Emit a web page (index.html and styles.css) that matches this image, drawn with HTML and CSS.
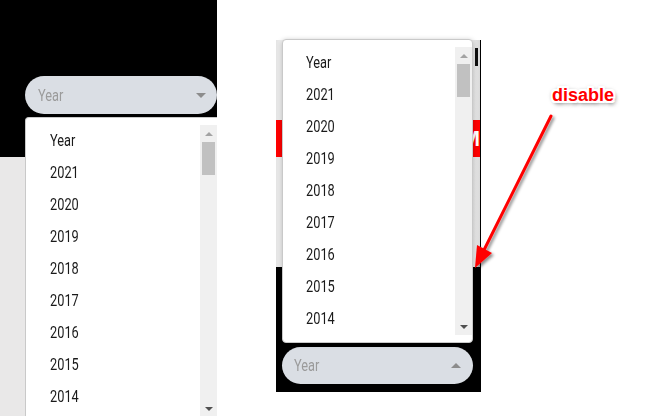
FILE: index.html
```html
<!DOCTYPE html>
<html>
<head>
<meta charset="utf-8">
<link rel="stylesheet" href="styles.css">
</head>
<body>
<div class="page">
  <section class="left">
    <div class="left-top">
      <div class="pill"><span class="pill-text">Year</span><span class="caret caret-down"></span></div>
    </div>
    <div class="left-bottom"></div>
    <div class="menu menu-left">
      <ul class="options">
        <li><span>Year</span></li><li><span>2021</span></li><li><span>2020</span></li><li><span>2019</span></li><li><span>2018</span></li><li><span>2017</span></li><li><span>2016</span></li><li><span>2015</span></li><li><span>2014</span></li>
      </ul>
      <div class="sbar">
        <div class="sbtn"><span class="tri tri-up"></span></div>
        <div class="track"><div class="thumb"></div></div>
        <div class="sbtn"><span class="tri tri-down"></span></div>
      </div>
    </div>
  </section>
  <section class="right">
    <div class="frame">
      <div class="frame-content">
        <div class="tick-bar"></div>
        <div class="banner">M</div>
      </div>
      <div class="frame-bottom">
        <div class="pill pill-wide"><span class="pill-text">Year</span><span class="caret caret-up"></span></div>
      </div>
    </div>
    <div class="menu menu-right">
      <ul class="options">
        <li><span>Year</span></li><li><span>2021</span></li><li><span>2020</span></li><li><span>2019</span></li><li><span>2018</span></li><li><span>2017</span></li><li><span>2016</span></li><li><span>2015</span></li><li><span>2014</span></li>
      </ul>
      <div class="sbar">
        <div class="sbtn"><span class="tri tri-up"></span></div>
        <div class="track"><div class="thumb"></div></div>
        <div class="sbtn"><span class="tri tri-down"></span></div>
      </div>
    </div>
  </section>
  <div class="note">disable</div>
  <svg class="arrow" width="671" height="416" viewBox="0 0 671 416">
    <defs>
      <filter id="sh" x="-20%" y="-20%" width="140%" height="140%">
        <feDropShadow dx="2" dy="2" stdDeviation="1.5" flood-color="#000" flood-opacity="0.45"/>
      </filter>
    </defs>
    <g filter="url(#sh)">
      <line x1="551" y1="116" x2="483" y2="252" stroke="#ff0000" stroke-width="3" stroke-linecap="round"/>
      <polygon points="475,268 477,245 492,253" fill="#ff0000"/>
    </g>
  </svg>
</div>
</body>
</html>
```
FILE: styles.css
```css
* { box-sizing: border-box; }
html, body { margin: 0; padding: 0; background: #fff; }
body {
  font-family: Roboto, "Liberation Sans", sans-serif;
  width: 671px;
  height: 416px;
  overflow: hidden;
}
.page {
  position: relative;
  display: flex;
  width: 671px;
  height: 416px;
}
.left {
  position: relative;
  width: 217px;
  display: flex;
  flex-direction: column;
}
.left-top {
  height: 157px;
  background: #000;
  padding: 76px 0 0 25px;
}
.left-bottom {
  flex: 1;
  background: #e9e8e8;
}
.pill {
  height: 38px;
  border-radius: 19px;
  background: #dadee4;
  display: flex;
  align-items: center;
  justify-content: space-between;
  padding: 0 11px 0 13px;
}
.pill-text {
  display: inline-block;
  color: #9b9b9b;
  font-size: 16px;
  transform: scaleX(0.8);
  transform-origin: left center;
}
.caret {
  width: 0;
  height: 0;
  border-left: 5px solid transparent;
  border-right: 5px solid transparent;
}
.caret-down { border-top: 5px solid #8c8c8c; }
.caret-up { border-bottom: 5px solid #8c8c8c; }
.pill-wide { height: 37px; padding: 0 12px 0 12px; flex: 1; }

.menu {
  position: absolute;
  background: #fff;
  border: 1px solid #c9c9c9;
  border-radius: 4px;
  display: flex;
  overflow: hidden;
}
.menu-left {
  left: 25px;
  top: 117px;
  width: 192px;
  height: 304px;
  border-right: none;
  border-bottom: none;
  border-radius: 4px 0 0 0;
}
.menu-right {
  left: 6px;
  top: 39px;
  width: 191px;
  height: 304px;
  box-shadow: 0 1px 5px rgba(0, 0, 0, 0.25);
}
.options {
  list-style: none;
  margin: 0;
  padding: 7px 0 0 0;
  flex: 1;
  overflow: hidden;
}
.options li {
  height: 32px;
  line-height: 32px;
  padding-left: 23px;
  font-size: 16px;
  color: #1a1a1a;
}
.options li span {
  display: inline-block;
  transform: scaleX(0.8);
  transform-origin: left center;
}
.menu-left .options li { padding-left: 24px; }
.sbar {
  width: 17px;
  margin: 7px 0;
  background: #f0f0f0;
  display: flex;
  flex-direction: column;
}
.menu-left .sbar { margin: 7px 0 4px 0; }
.sbtn {
  height: 17px;
  display: flex;
  align-items: center;
  justify-content: center;
}
.track {
  flex: 1;
  padding: 0 2px;
}
.thumb {
  height: 33px;
  background: #c1c1c1;
}
.tri {
  width: 0;
  height: 0;
  border-left: 4px solid transparent;
  border-right: 4px solid transparent;
}
.tri-up { border-bottom: 4px solid #a3a3a3; }
.tri-down { border-top: 4px solid #505050; }

.right {
  position: relative;
  margin-left: 59px;
  padding-top: 40px;
}
.frame {
  width: 205px;
  height: 352px;
  background: #000;
  display: flex;
  flex-direction: column;
  padding: 0 1px 0 0;
}
.frame-content {
  height: 227px;
  background: linear-gradient(to right, #e4e4e4 0, #f3f3f3 6px, #fff 20px, #fff 185px, #ececec 197px, #d9d9d9 204px);
  position: relative;
  padding-top: 8px;
  display: flex;
  flex-direction: column;
  align-items: flex-end;
}
.tick-bar {
  width: 3px;
  height: 18px;
  background: #111;
  margin-right: 2px;
}
.banner {
  margin-top: 54px;
  width: 100%;
  height: 37px;
  background: #ff0000;
  color: #fff;
  font-family: "Liberation Sans", Arial, sans-serif;
  font-weight: bold;
  font-size: 22px;
  line-height: 37px;
  text-align: right;
}
.frame-bottom {
  flex: 1;
  display: flex;
  align-items: flex-end;
  padding: 0 7px 8px 6px;
}

.note {
  position: absolute;
  left: 552px;
  top: 85px;
  font-family: "Liberation Sans", Arial, sans-serif;
  font-weight: bold;
  font-size: 18px;
  color: #ff0000;
  text-shadow:
    -2px 0 0 #fff, 2px 0 0 #fff, 0 -2px 0 #fff, 0 2px 0 #fff,
    -2px -2px 0 #fff, 2px 2px 0 #fff, -2px 2px 0 #fff, 2px -2px 0 #fff,
    0 0 4px rgba(0, 0, 0, 0.6),
    2px 3px 4px rgba(0, 0, 0, 0.6);
}
.arrow {
  position: absolute;
  left: 0;
  top: 0;
  pointer-events: none;
}
```
